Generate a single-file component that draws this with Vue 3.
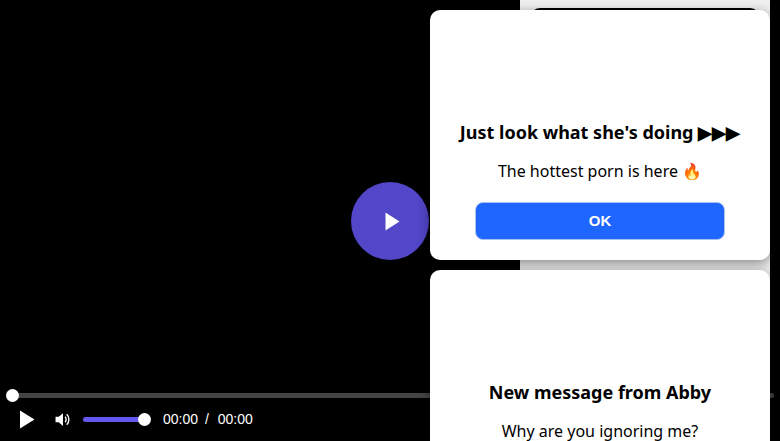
<script setup>
const notices = [
  { title: "Just look what she's doing ▶▶▶", body: 'The hottest porn is here 🔥' },
  { title: 'New message from Abby', body: 'Why are you ignoring me?' }
]
</script>

<template>
  <div class="page">
    <main class="stage">
      <div class="video"></div>
      <aside class="side"><div class="thumb"></div></aside>
    </main>

    <div class="controls">
      <div class="progress"><span class="knob"></span></div>
      <div class="bar">
        <svg class="play" width="17" height="19" viewBox="0 0 17 19"><path d="M1 .5L15.5 9.5 1 18.5Z" fill="#fff"/></svg>
        <svg class="speaker" width="17" height="17" viewBox="0 0 16 16">
          <path d="M0.5 5.5H3.5L7.5 2V14L3.5 10.5H0.5Z" fill="#fff"/>
          <path d="M9.5 5.5C10.8 6.8 10.8 9.2 9.5 10.5" fill="none" stroke="#fff" stroke-width="1.3"/>
          <path d="M11 3C13.8 5.5 13.8 10.5 11 13" fill="none" stroke="#fff" stroke-width="1.3"/>
        </svg>
        <div class="volume"><span class="knob vol-knob"></span></div>
        <span class="time">00:00 <i>/</i> 00:00</span>
      </div>
    </div>

    <button class="big-play" aria-label="Play">
      <svg width="15" height="19" viewBox="0 0 15 19"><path d="M.5 .5L14.5 9.5 .5 18.5Z" fill="#fff"/></svg>
    </button>

    <div class="notices">
      <section v-for="n in notices" :key="n.title" class="card">
        <h2>{{ n.title }}</h2>
        <p>{{ n.body }}</p>
        <button class="ok">OK</button>
      </section>
    </div>
  </div>
</template>

<style>
html, body { margin: 0; background: #000; overflow: hidden; }
</style>

<style scoped>
.page {
  position: relative;
  width: 780px;
  height: 441px;
  overflow: hidden;
  background: #000;
  font-family: "Noto Sans", sans-serif;
}
.stage { display: flex; height: 100%; }
.video { width: 520px; background: #000; }
.side {
  width: 250px;
  padding: 8px 10px 0;
  box-sizing: border-box;
  background: #f0f0f0;
}
.thumb { height: 200px; background: #000; border-radius: 10px; }

.controls {
  position: absolute;
  left: 0;
  right: 0;
  bottom: 0;
  height: 48px;
}
.progress {
  position: absolute;
  left: 12px;
  right: 6px;
  top: 0;
  height: 5px;
  border-radius: 3px;
  background: #444;
}
.knob {
  position: absolute;
  width: 13px;
  height: 13px;
  border-radius: 50%;
  background: #fff;
}
.progress .knob { left: -6px; top: -4px; }
.bar {
  position: absolute;
  left: 19px;
  top: 17px;
  display: flex;
  align-items: center;
  height: 19px;
}
.speaker { margin-left: 19px; }
.volume {
  position: relative;
  width: 61px;
  height: 5px;
  margin-left: 11px;
  border-radius: 3px;
  background: #6558f0;
}
.vol-knob { right: -7px; top: -4px; }
.time {
  margin-left: 19px;
  font: 14px/19px "Liberation Sans", Arial, sans-serif;
  color: #fff;
  white-space: pre;
}
.time i { font-style: normal; margin: 0 5px 0 3px; }

.big-play {
  position: absolute;
  left: 351px;
  top: 182px;
  width: 78px;
  height: 78px;
  padding: 0 0 0 4px;
  border: 0;
  border-radius: 50%;
  background: #5246c9;
  display: flex;
  align-items: center;
  justify-content: center;
}

.notices {
  position: absolute;
  left: 430px;
  top: 10px;
  width: 340px;
  display: flex;
  flex-direction: column;
  gap: 10px;
}
.card {
  height: 250px;
  box-sizing: border-box;
  padding-top: 110px;
  border-radius: 10px;
  background: #fff;
  box-shadow: 0 3px 12px rgba(0, 0, 0, .45);
  text-align: center;
  color: #000;
}
.card h2 { margin: 0; font-size: 18px; line-height: 25px; font-weight: 700; }
.card p { margin: 15px 0 0; font-size: 16px; line-height: 22px; }
.ok {
  display: block;
  width: 250px;
  height: 38px;
  margin: 20px auto 0;
  padding: 0 0 2px;
  border: 1px solid #a9c2f0;
  border-radius: 8px;
  background: #1f66ff;
  color: #fff;
  font: 700 15px "Liberation Sans", Arial, sans-serif;
}
</style>
